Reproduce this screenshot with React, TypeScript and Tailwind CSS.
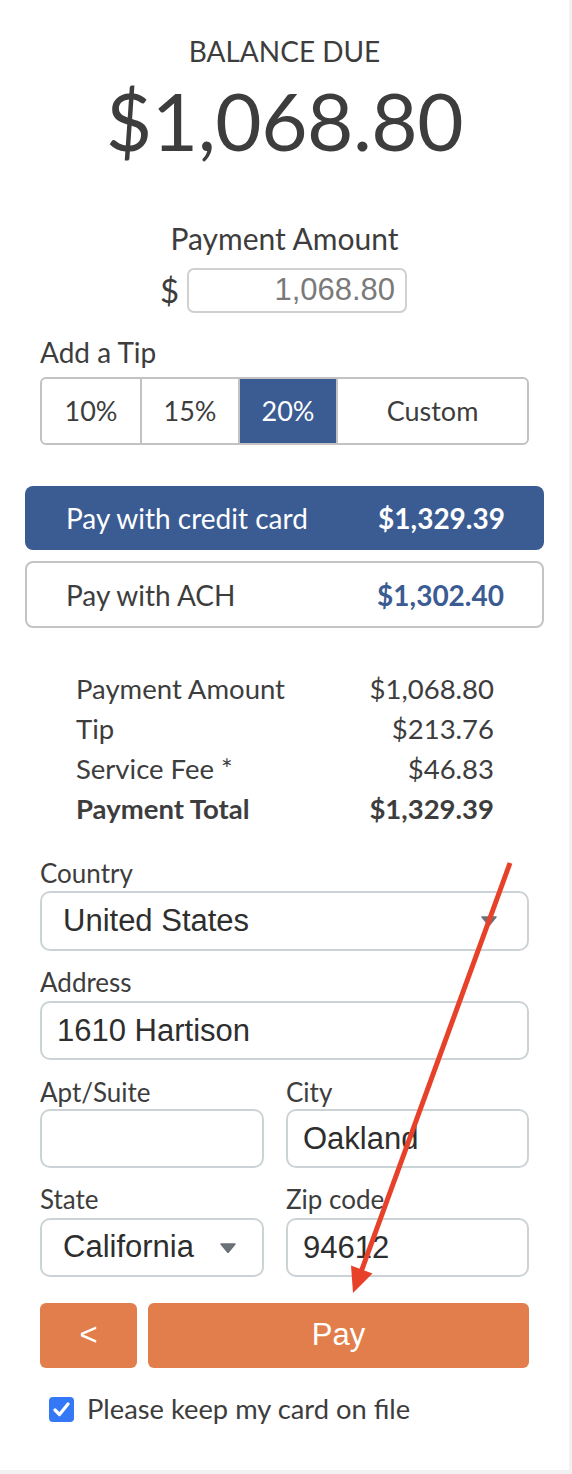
import React from 'react';

const TIPS = [
  { label: '10%', w: 'w-[98px]' },
  { label: '15%', w: 'w-[98px]' },
  { label: '20%', w: 'w-[98px]', active: true },
  { label: 'Custom', w: 'flex-1' },
];

const SUMMARY = [
  { label: 'Payment Amount', value: '$1,068.80' },
  { label: 'Tip', value: '$213.76' },
  { label: 'Service Fee *', value: '$46.83' },
  { label: 'Payment Total', value: '$1,329.39', bold: true },
];

const lato = "font-['Lato','Open_Sans',sans-serif]";
const field = "font-['Liberation_Sans','Arial',sans-serif]";

function Caret() {
  return (
    <svg width="16" height="10" viewBox="0 0 16 10" className="shrink-0">
      <path d="M1 1 L15 1 L8 9.5 Z" fill="#6b7079" stroke="#6b7079" strokeWidth="1.5" strokeLinejoin="round" />
    </svg>
  );
}

function Label({ children, className = '' }: { children: React.ReactNode; className?: string }) {
  return <div className={`text-[26px] leading-[30px] text-[#3d3d3d] ${className}`}>{children}</div>;
}

function TextBox({ value, className = '' }: { value: string; className?: string }) {
  return (
    <input
      defaultValue={value}
      className={`w-full h-[59px] rounded-[10px] border-2 border-[#ccd3d6] bg-white pl-[15px] text-[31px] text-[#2e2e2e] outline-none ${field} ${className}`}
    />
  );
}

export default function App() {
  return (
    <div className={`min-h-screen bg-[#f1f1f3] ${lato}`}>
      <div className="relative w-[569px] h-[1470px] bg-white text-[#3d3d3d]">
        {/* Header */}
        <div className="pt-[33px] text-center text-[28px] leading-[36px]">BALANCE DUE</div>
        <div className="mt-[3px] text-center text-[80px] leading-[96px] tracking-[-0.5px]">$1,068.80</div>

        {/* Payment amount */}
        <div className="mt-[53px] text-center text-[30px] leading-[34px]">Payment Amount</div>
        <div className="mt-[13px] flex items-center justify-center gap-[8px] pr-[2px]">
          <span className="text-[33px] leading-[45px]">$</span>
          <input
            defaultValue="1,068.80"
            className={`w-[220px] h-[45px] rounded-[7px] border-2 border-[#d0d0d0] px-[10px] text-right text-[31px] text-[#7a7a7a] outline-none ${field}`}
          />
        </div>

        {/* Tip */}
        <div className="px-[40px]">
          <div className="mt-[22px] text-[28px] leading-[34px]">Add a Tip</div>
          <div className="mt-[8px] flex h-[68px] overflow-hidden rounded-[6px] border-2 border-[#c2c2c2]">
            {TIPS.map((t, i) => (
              <div
                key={t.label}
                className={`${t.w} flex items-center justify-center text-[27px] ${i > 0 ? 'border-l-2 border-[#c2c2c2]' : ''} ${t.active ? 'bg-[#3b5b93] text-white border-[#3b5b93]' : ''}`}
              >
                {t.label}
              </div>
            ))}
          </div>
        </div>

        {/* Payment methods */}
        <div className="px-[25px]">
          <div className="mt-[41px] flex h-[64px] items-center justify-between rounded-[8px] bg-[#3b5b93] pl-[41px] pr-[39px] text-[28px] text-white">
            <span>Pay with credit card</span>
            <span className="font-bold">$1,329.39</span>
          </div>
          <div className="mt-[11px] flex h-[67px] items-center justify-between rounded-[8px] border-2 border-[#c4c4c4] pl-[39px] pr-[38px] text-[28px]">
            <span>Pay with ACH</span>
            <span className="font-bold text-[#3b5b93]">$1,302.40</span>
          </div>
        </div>

        {/* Summary */}
        <div className="mt-[41px] pl-[76px] pr-[75px]">
          {SUMMARY.map((r) => (
            <div key={r.label} className={`flex justify-between text-[27.5px] leading-[40px] ${r.bold ? 'font-bold' : ''}`}>
              <span>{r.label}</span>
              <span>{r.value}</span>
            </div>
          ))}
        </div>

        {/* Address form */}
        <div className="px-[40px]">
          <Label className="mt-[29px]">Country</Label>
          <div className={`mt-[3px] flex h-[60px] items-center justify-between rounded-[10px] border-2 border-[#ccd3d6] pl-[21px] pr-[30px] text-[31px] text-[#2e2e2e] ${field}`}>
            <span>United States</span>
            <Caret />
          </div>

          <Label className="mt-[16px]">Address</Label>
          <TextBox value="1610 Hartison" className="mt-[4px] h-[58px]" />

          <div className="mt-[17px] grid grid-cols-[224px_1fr] gap-x-[22px]">
            <div>
              <Label>Apt/Suite</Label>
              <TextBox value="" className="mt-[2px]" />
            </div>
            <div>
              <Label>City</Label>
              <TextBox value="Oakland" className="mt-[2px]" />
            </div>
          </div>

          <div className="mt-[16px] grid grid-cols-[224px_1fr] gap-x-[22px]">
            <div>
              <Label>State</Label>
              <div className={`mt-[4px] flex h-[59px] items-center gap-[26px] rounded-[10px] border-2 border-[#ccd3d6] pl-[21px] text-[31px] text-[#2e2e2e] ${field}`}>
                <span>California</span>
                <Caret />
              </div>
            </div>
            <div>
              <Label>Zip code</Label>
              <TextBox value="94612" className="mt-[4px]" />
            </div>
          </div>

          {/* Actions */}
          <div className="mt-[26px] flex h-[65px] gap-[11px]">
            <button className={`w-[97px] rounded-[6px] bg-[#e27e4b] text-[31px] text-white ${field}`}>&lt;</button>
            <button className={`flex-1 rounded-[6px] bg-[#e27e4b] text-[31px] text-white ${field}`}>Pay</button>
          </div>

          <label className="mt-[26px] flex items-center gap-[13px] pl-[9px] text-[27.3px] leading-[30px]">
            <span className="flex h-[25px] w-[25px] items-center justify-center rounded-[4px] bg-[#3478f6]">
              <svg width="17" height="15" viewBox="0 0 17 15">
                <path d="M2 8 L6.5 12.5 L15 2" fill="none" stroke="white" strokeWidth="3.2" strokeLinecap="round" strokeLinejoin="round" />
              </svg>
            </span>
            <span>Please keep my card on file</span>
          </label>
        </div>

        {/* Annotation arrow */}
        <svg className="pointer-events-none absolute left-0 top-0" width="569" height="1470">
          <line x1="510" y1="863" x2="361" y2="1272" stroke="#e8412a" strokeWidth="5" />
          <polygon points="351,1265.5 372.5,1273.5 353,1293" fill="#e8412a" />
        </svg>
      </div>
    </div>
  );
}
